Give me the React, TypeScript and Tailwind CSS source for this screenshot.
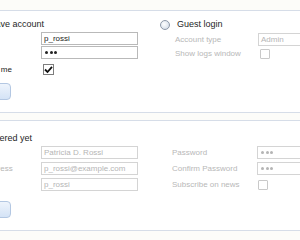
import React from "react";

const font = { fontFamily: '"Liberation Sans", Arial, sans-serif' };

function Radio() {
  return (
    <span className="inline-block w-[10px] h-[10px] rounded-full border border-[#8e99a8] bg-[radial-gradient(circle_at_40%_40%,#ffffff_0%,#dfe6ee_60%,#c9d3df_100%)] shrink-0" />
  );
}

function Input({ value, disabled, wide }: { value: string; disabled?: boolean; wide?: boolean }) {
  return (
    <div
      className={
        "h-[13px] border flex items-center px-[2px] bg-white text-[8px] leading-none " +
        (wide ? "w-[90px] " : "w-[97px] ") +
        (disabled ? "border-[#d4d4d4] text-[#b5b5b5]" : "border-[#b9b9b9] text-[#222]")
      }
    >
      {value}
    </div>
  );
}

function Dots({ disabled }: { disabled?: boolean }) {
  return (
    <div
      className={
        "h-[13px] border flex items-center gap-[1.5px] px-[3px] bg-white " +
        (disabled ? "border-[#d4d4d4] w-[90px]" : "border-[#b9b9b9] w-[97px]")
      }
    >
      {[0, 1, 2].map((i) => (
        <span
          key={i}
          className={"w-[3px] h-[3px] rounded-full " + (disabled ? "bg-[#b5b5b5]" : "bg-[#222]")}
        />
      ))}
    </div>
  );
}

function Check({ checked }: { checked?: boolean }) {
  if (checked) {
    return (
      <span className="w-[11px] h-[11px] border border-[#7d7d7d] bg-white flex items-center justify-center">
        <svg width="9" height="9" viewBox="0 0 9 9">
          <path d="M1 4.5 L3.5 7 L8 1.8" stroke="#111" strokeWidth="1.8" fill="none" />
        </svg>
      </span>
    );
  }
  return <span className="w-[10px] h-[10px] border border-[#c9c9c9] bg-white rounded-[1px]" />;
}

function Button() {
  return (
    <div className="h-[17px] w-[60px] rounded-[4px] border border-[#b3c7e2] bg-[linear-gradient(#eef4fc,#d4e3f6)]" />
  );
}

export default function App() {
  return (
    <div className="w-[300px] h-[240px] overflow-hidden bg-[#fcfcf9] text-[8px]" style={font}>
      <div className="-ml-[45px] w-[400px] flex flex-col">
        <div className="h-[10px]" />
        {/* Panel 1 */}
        <div className="h-[103px] border-y border-[#d6dde8] bg-white flex">
          <div className="w-[205px] flex flex-col">
            <div className="mt-[7px] h-[14px] flex items-center gap-[5px] pl-[19px] text-[9px] text-[#1e1e1e]">
              <Radio />
              <span>Have account</span>
            </div>
            <div className="h-[13px] flex items-center">
              <span className="w-[86px] pl-[4px] text-[#333]">User</span>
              <Input value="p_rossi" />
            </div>
            <div className="mt-[1px] h-[13px] flex items-center">
              <span className="w-[86px] pl-[4px] text-[#333]">Pass</span>
              <Dots />
            </div>
            <div className="mt-[5px] h-[11px] flex items-center">
              <span className="w-[88px] pl-[4px] text-[#222]">Remember me</span>
              <Check checked />
            </div>
            <div className="mt-[8px] flex">
              <div className="-ml-[4px]">
                <Button />
              </div>
            </div>
          </div>
          <div className="flex flex-col">
            <div className="mt-[7px] h-[14px] flex items-center gap-[7px] text-[9px] text-[#1e1e1e]">
              <Radio />
              <span>Guest login</span>
            </div>
            <div className="mt-[1px] h-[13px] flex items-center">
              <span className="w-[98px] pl-[15px] text-[#b8b8b8]">Account type</span>
              <Input value="Admin" disabled wide />
            </div>
            <div className="mt-[1px] h-[13px] flex items-center">
              <span className="w-[100px] pl-[15px] text-[#b8b8b8]">Show logs window</span>
              <Check />
            </div>
          </div>
        </div>
        <div className="h-[7px]" />
        {/* Panel 2 */}
        <div className="h-[111px] border-y border-[#d6dde8] bg-white flex">
          <div className="w-[205px] flex flex-col">
            <div className="mt-[11px] h-[14px] flex items-center pl-[6px] text-[9px] text-[#1e1e1e]">
              <span>Not registered yet</span>
            </div>
            <div className="h-[13px] flex items-center">
              <span className="w-[86px] pl-[4px] text-[#b5b5b5]">Name</span>
              <Input value="Patricia D. Rossi" disabled />
            </div>
            <div className="mt-[3px] h-[13px] flex items-center">
              <span className="w-[86px] pl-[7px] text-[#b5b5b5]">Email address</span>
              <Input value="p_rossi@example.com" disabled />
            </div>
            <div className="mt-[3px] h-[13px] flex items-center">
              <span className="w-[86px] pl-[4px] text-[#b5b5b5]">Login</span>
              <Input value="p_rossi" disabled />
            </div>
            <div className="mt-[10px] flex">
              <div className="-ml-[4px]">
                <Button />
              </div>
            </div>
          </div>
          <div className="flex flex-col pl-[12px]">
            <div className="mt-[25px] h-[13px] flex items-center">
              <span className="w-[85px] text-[#b8b8b8]">Password</span>
              <Dots disabled />
            </div>
            <div className="mt-[3px] h-[13px] flex items-center">
              <span className="w-[85px] text-[#b8b8b8]">Confirm Password</span>
              <Dots disabled />
            </div>
            <div className="mt-[3px] h-[13px] flex items-center">
              <span className="w-[86px] text-[#b8b8b8]">Subscribe on news</span>
              <Check />
            </div>
          </div>
        </div>
      </div>
    </div>
  );
}
